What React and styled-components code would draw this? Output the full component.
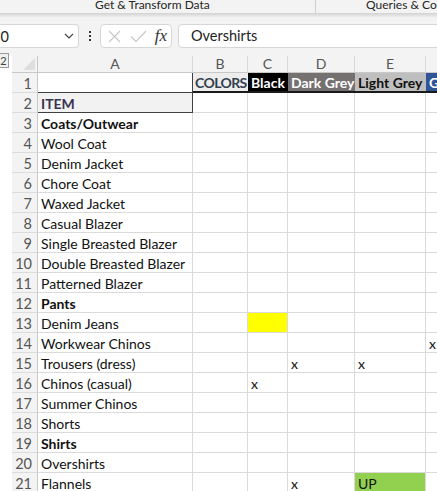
import React from 'react'
import styled, { createGlobalStyle } from 'styled-components'

const Global = createGlobalStyle`
  body {
    margin: 0;
    background: #ffffff;
    font-family: Lato, "Open Sans", sans-serif;
  }
`;

const cols = [
  { key: 'A', w: 155 },
  { key: 'B', w: 55 },
  { key: 'C', w: 40 },
  { key: 'D', w: 67 },
  { key: 'E', w: 71 },
  { key: 'F', w: 60 },
];

const header = {
  B: { text: 'COLORS', bg: '#ededed', color: '#333f4f', tight: true },
  C: { text: 'Black', bg: '#000000', color: '#ffffff' },
  D: { text: 'Dark Grey', bg: '#767171', color: '#ffffff' },
  E: { text: 'Light Grey', bg: '#bfbfbf', color: '#111111' },
  F: { text: 'G', bg: '#2f5597', color: '#ffffff' },
};

const rows = [
  { n: 2, a: 'ITEM', item: true },
  { n: 3, a: 'Coats/Outwear', bold: true },
  { n: 4, a: 'Wool Coat' },
  { n: 5, a: 'Denim Jacket' },
  { n: 6, a: 'Chore Coat' },
  { n: 7, a: 'Waxed Jacket' },
  { n: 8, a: 'Casual Blazer' },
  { n: 9, a: 'Single Breasted Blazer' },
  { n: 10, a: 'Double Breasted Blazer' },
  { n: 11, a: 'Patterned Blazer' },
  { n: 12, a: 'Pants', bold: true },
  { n: 13, a: 'Denim Jeans', fill: { C: '#ffff00' } },
  { n: 14, a: 'Workwear Chinos', marks: { F: 'x' } },
  { n: 15, a: 'Trousers (dress)', marks: { D: 'x', E: 'x' } },
  { n: 16, a: 'Chinos (casual)', marks: { C: 'x' } },
  { n: 17, a: 'Summer Chinos' },
  { n: 18, a: 'Shorts' },
  { n: 19, a: 'Shirts', bold: true },
  { n: 20, a: 'Overshirts' },
  { n: 21, a: 'Flannels', marks: { D: 'x', E: 'UP' }, fill: { E: '#92d050' } },
];

export default function App() {
  return (
    <Page>
      <Global />
      <Ribbon>
        <RibbonGroup $w={316} $pad={95}>Get &amp; Transform Data</RibbonGroup>
        <RibbonGroup $w={130} $pad={50}>Queries &amp; Connections</RibbonGroup>
      </Ribbon>
      <Shadow />
      <FormulaBar>
        <NameBox>
          <NameText>10</NameText>
          <svg width="10" height="6" viewBox="0 0 10 6">
            <path d="M1 1 L5 5 L9 1" fill="none" stroke="#444" strokeWidth="1.2" />
          </svg>
        </NameBox>
        <Dots>
          <Dot /><Dot /><Dot />
        </Dots>
        <FxBox>
          <svg width="15" height="15" viewBox="0 0 15 15">
            <path d="M2 2 L13 13 M13 2 L2 13" stroke="#c6c6c6" strokeWidth="1.1" />
          </svg>
          <svg width="17" height="13" viewBox="0 0 17 13">
            <path d="M1 6.5 L6 11.5 L16 1" fill="none" stroke="#c6c6c6" strokeWidth="1.1" />
          </svg>
          <Fx>fx</Fx>
        </FxBox>
        <Input>Overshirts</Input>
      </FormulaBar>
      <Sheet>
        <Outline><LevelBtn>2</LevelBtn></Outline>
        <Corner>
          <svg width="12" height="12" viewBox="0 0 12 12">
            <path d="M12 0 L12 12 L0 12 Z" fill="#dedede" />
          </svg>
        </Corner>
        {cols.map(c => (
          <ColHead key={c.key}>{c.key}</ColHead>
        ))}

        <Outline />
        <RowHead>1</RowHead>
        <Cell $thickBottom $thickRight />
        {cols.slice(1).map(c => (
          <HeadCell
            key={c.key}
            $bg={header[c.key].bg}
            $color={header[c.key].color}
            $tight={header[c.key].tight}
          >
            {header[c.key].text}
          </HeadCell>
        ))}

        {rows.map(r => (
          <React.Fragment key={r.n}>
            <Outline />
            <RowHead>{r.n}</RowHead>
            <Cell
              $bold={r.bold || r.item}
              $item={r.item}
              $thickBottom={r.item}
              $thickRight={r.item}
            >
              {r.a}
            </Cell>
            {cols.slice(1).map(c => (
              <Cell key={c.key} $bg={r.fill && r.fill[c.key]}>
                {r.marks && r.marks[c.key]}
              </Cell>
            ))}
          </React.Fragment>
        ))}
      </Sheet>
    </Page>
  )
}

const Page = styled.div`
  width: 437px;
  height: 491px;
  overflow: hidden;
  background: #ffffff;
`;

const Ribbon = styled.div`
  height: 13px;
  background: #f3f3f3;
  display: flex;
  overflow: hidden;
  white-space: nowrap;
`;

const RibbonGroup = styled.div`
  flex: 0 0 ${p => p.$w}px;
  box-sizing: border-box;
  padding-left: ${p => p.$pad}px;
  font-family: Lato, sans-serif;
  font-size: 12px;
  line-height: 13px;
  margin-top: -2px;
  color: #262626;
  border-right: 1px solid #cfcfcf;
  height: 15px;
  overflow: hidden;
  &:last-child {
    border-right: none;
  }
`;

const Shadow = styled.div`
  height: 5px;
  background: linear-gradient(#d2d2d2, #f3f3f3);
`;

const FormulaBar = styled.div`
  height: 38px;
  background: #f3f3f3;
  display: flex;
  align-items: center;
  padding-bottom: 2px;
  box-sizing: border-box;
`;

const NameBox = styled.div`
  width: 79px;
  height: 24px;
  box-sizing: border-box;
  background: #ffffff;
  border: 1px solid #d6d6d6;
  border-left: none;
  border-radius: 0 4px 4px 0;
  display: flex;
  align-items: center;
  justify-content: space-between;
  padding: 0 4px 0 0;
`;

const NameText = styled.span`
  font-family: Lato, sans-serif;
  font-size: 14.5px;
  color: #222;
  margin-left: -8px;
`;

const Dots = styled.div`
  width: 21px;
  display: flex;
  flex-direction: column;
  align-items: center;
  gap: 2px;
`;

const Dot = styled.div`
  width: 2px;
  height: 2px;
  background: #333;
`;

const FxBox = styled.div`
  width: 72px;
  height: 24px;
  box-sizing: border-box;
  background: #ffffff;
  border: 1px solid #d6d6d6;
  border-radius: 4px;
  display: flex;
  align-items: center;
  justify-content: space-between;
  padding: 0 4px 0 6px;
`;

const Fx = styled.span`
  font-family: "Liberation Serif", serif;
  font-style: italic;
  font-size: 17px;
  color: #333;
`;

const Input = styled.div`
  flex: 1;
  height: 24px;
  margin-left: 6px;
  margin-right: -10px;
  box-sizing: border-box;
  background: #ffffff;
  border: 1px solid #d6d6d6;
  border-radius: 4px;
  padding-left: 12px;
  font-family: Lato, sans-serif;
  font-size: 14.5px;
  line-height: 22px;
  color: #222;
`;

const Sheet = styled.div`
  display: grid;
  grid-template-columns: 12px 26px ${cols.map(c => c.w + 'px').join(' ')};
  grid-template-rows: 17px;
  grid-auto-rows: 20px;
`;

const Outline = styled.div`
  background: #ffffff;
  position: relative;
`;

const LevelBtn = styled.div`
  position: absolute;
  left: -2px;
  top: -3px;
  width: 11px;
  height: 15px;
  box-sizing: border-box;
  border: 1px solid #9a9a9a;
  background: #f0f0f0;
  font-size: 11px;
  line-height: 13px;
  text-align: center;
  color: #444;
`;

const Corner = styled.div`
  background: #f3f3f3;
  border-right: 1px solid #c8c8c8;
  border-bottom: 1px solid #c8c8c8;
  display: flex;
  align-items: flex-end;
  justify-content: flex-end;
  padding: 0 2px 2px 0;
`;

const ColHead = styled.div`
  background: #f3f3f3;
  border-right: 1px solid #d9d9d9;
  border-bottom: 1px solid #c8c8c8;
  text-align: center;
  font-family: Lato, sans-serif;
  font-size: 14px;
  line-height: 15px;
  color: #555;
  overflow: hidden;
`;

const RowHead = styled.div`
  background: #f3f3f3;
  border-right: 1px solid #c8c8c8;
  border-bottom: 1px solid #dcdcdc;
  text-align: right;
  padding-right: 5px;
  font-family: Lato, sans-serif;
  font-size: 14.5px;
  line-height: 21px;
  color: #555;
`;

const Cell = styled.div`
  background: ${p => p.$bg || (p.$item ? '#f2f2f2' : '#ffffff')};
  border-right: ${p => p.$thickRight ? '1px solid #404040' : '1px solid #dadada'};
  border-bottom: ${p => p.$thickBottom ? '1px solid #404040' : '1px solid #dadada'};
  padding-left: 3px;
  font-size: 14px;
  line-height: 21px;
  font-weight: ${p => p.$bold ? 700 : 400};
  color: ${p => p.$item ? '#3b3450' : '#111'};
  white-space: nowrap;
  overflow: hidden;
`;

const HeadCell = styled.div`
  background: ${p => p.$bg};
  color: ${p => p.$color};
  border-bottom: 2px solid #1a1a1a;
  padding-left: ${p => p.$tight ? 2 : 3}px;
  font-size: 14px;
  letter-spacing: ${p => p.$tight ? '-0.6px' : '0'};
  line-height: 20px;
  font-weight: 700;
  white-space: nowrap;
  overflow: hidden;
`;
